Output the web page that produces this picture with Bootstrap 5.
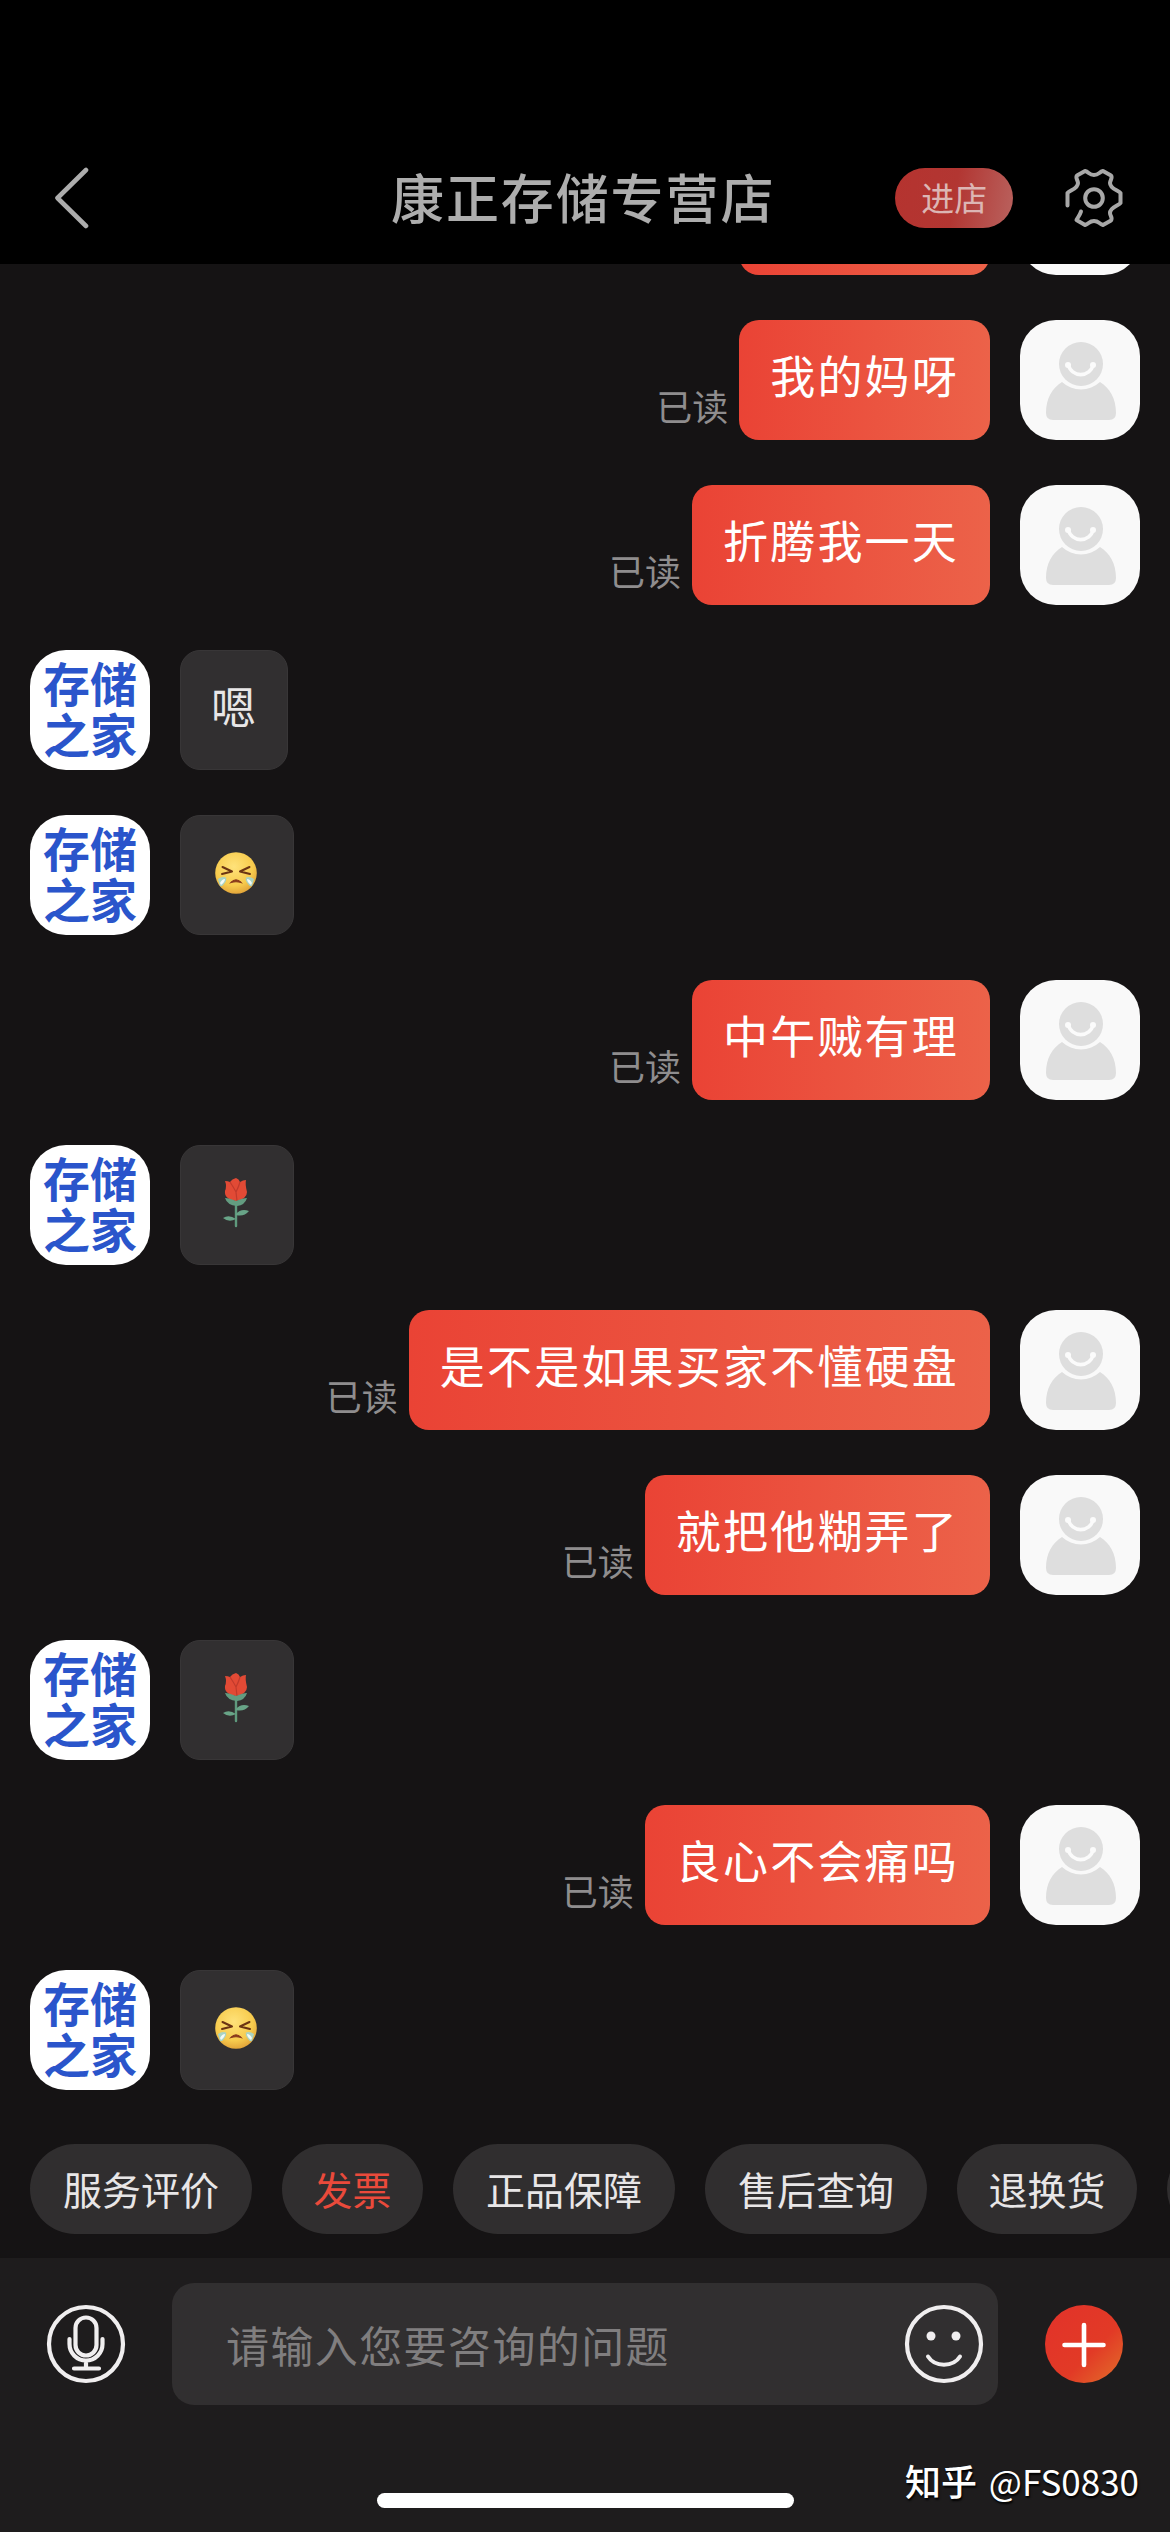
<!DOCTYPE html>
<html lang="zh-CN">
<head>
<meta charset="utf-8">
<title>康正存储专营店</title>
<link href="https://cdn.jsdelivr.net/npm/bootstrap@5.3.0/dist/css/bootstrap.min.css" rel="stylesheet">
<style>
html,body{background:#151314}
body{font-family:"Noto Sans CJK SC",sans-serif;color:#e8e6e7;width:1170px;height:2532px;overflow:hidden;line-height:1}
.topbar{height:264px;background:#000;padding:132px 45px 0 45px}
.topbar .inner{height:132px}
.title{font-size:53px;font-weight:500;letter-spacing:1.9px;color:#adadad;line-height:60px;margin-left:302px;padding-bottom:5px}
.enter{width:120px;height:60px;font-size:33px;color:#dcb6b4;background:linear-gradient(100deg,#b5332f 0%,#b23632 50%,#b9625e 100%);margin-left:120px;padding-bottom:2px}
.gear{margin-left:50px}
.feed{height:1880px;overflow:hidden}
.feed-list{gap:45px;margin-top:-109px;padding:0 30px}
.msg{height:120px}
.face{width:120px;height:120px;border-radius:36px;flex:none;overflow:hidden}
.me{background:#f9f9f9;margin-left:30px}
.shop{background:#fff;color:#2a55cb;font-weight:700;font-size:47px;line-height:51px;padding-top:6px;margin-right:30px;text-align:center}
.bub{height:120px;border-radius:20px;font-size:45px;letter-spacing:2.2px;line-height:60px;padding:25px 31px 0 31px;white-space:nowrap}
.out{background:linear-gradient(90deg,#ea4335,#ec6249);color:#fff}
.in{background:#312f30;width:108px;border:1px solid #383637;padding-left:30px}
.in.pic{width:114px;padding:0 2px 5px 0;display:flex;align-items:center;justify-content:center}
.read{font-size:36px;color:#8f8d8e;margin-right:11px;margin-bottom:17px;line-height:36px}
.chips{height:90px;padding-left:30px;gap:30px}
.chip{height:90px;font-size:39px;background:#302e2f;flex:none;white-space:nowrap;padding-bottom:1px}
.hotchip{color:#ea4a3b}
.w2{width:141px}.w3{width:180px}.w4{width:222px}
.dock{height:274px;background:#1e1c1d;margin-top:24px;padding:25px 46px 0}
.ask{width:826px;height:122px;border-radius:22px;background:#312f30;margin:0 46px;padding:0 14px 0 54px;font-size:43px;letter-spacing:1.4px;color:#807e7f}
.home{width:417px;height:15px;background:#fff;margin-top:88px}
.wm{right:31px;bottom:33px;font-size:35px;line-height:36px;color:#fff;text-shadow:1px 2px 2px #000}
.wm .brand{font-weight:500;font-size:36px;margin-right:4px}
svg{display:block;flex:none}
</style>
<script src="https://cdn.jsdelivr.net/npm/bootstrap@5.3.0/dist/js/bootstrap.bundle.min.js"></script>
</head>
<body class="position-relative m-0">
<svg width="0" height="0" class="position-absolute">
<defs>
<radialGradient id="skin" cx=".45" cy=".35" r=".65"><stop offset="0" stop-color="#ffe27a"/><stop offset=".7" stop-color="#f7cb4d"/><stop offset="1" stop-color="#e3a63a"/></radialGradient>
<linearGradient id="hot" x1="0" y1="0" x2="1" y2="1"><stop offset="0" stop-color="#e2322a"/><stop offset=".6" stop-color="#e23a26"/><stop offset="1" stop-color="#e2702a"/></linearGradient>
<symbol id="user" viewBox="0 0 120 120">
<path d="M26 93c0-14 6-25 16-31a28 28 0 0 0 38 0c10 6 16 17 16 31q0 7-7 7H33q-7 0-7-7z" fill="#dedede"/>
<circle cx="61" cy="44" r="22" fill="#dedede"/>
<path d="M48.500 45a12.500 12 0 0 0 24.500 0" fill="none" stroke="#fbfbfb" stroke-width="3.600"/>
<circle cx="48" cy="45" r="3" fill="#fbfbfb"/><circle cx="73" cy="45" r="3" fill="#fbfbfb"/>
</symbol>
<symbol id="cry" viewBox="0 0 42 42">
<circle cx="21" cy="21" r="20.800" fill="url(#skin)"/>
<path d="M7.500 15l9.500 4.500-10 2.500M34.500 15l-9.500 4.500 10 2.500" fill="none" stroke="#6b3413" stroke-width="2" stroke-linecap="round" stroke-linejoin="round"/>
<path d="M16 30.500q5-5.500 10 0-5-1.500-10 0z" fill="#8a3a1c" stroke="#8a3a1c" stroke-width="1.200"/>
<path d="M3 27q4-3 8-1.500 1 3-2 6.500-2 3-4 2zM39 27q-4-3-8-1.500-1 3 2 6.500 2 3 4 2z" fill="#a9d3c3"/>
<path d="M5 31q2-4 5-4 0 3-4 6zM37 31q-2-4-5-4 0 3 4 6z" fill="#f3faf6"/>
</symbol>
<symbol id="rose" viewBox="0 0 28 50">
<path d="M14 24v24" stroke="#5f9a7d" stroke-width="2.400" stroke-linecap="round"/>
<path d="M14 36q5-6 13-3-5 6-13 4zM14 41q-7-5-13-1 6 5 13 1z" fill="#68a487"/>
<path d="M3 3q3 0 5 1 2-3 6-4 3 1 4 4 3-2 6-2-1 4 1 12 0 7-11 9Q2 21 3 13 5 8 3 3z" fill="#e24a35"/>
<path d="M8 4q4 6 6 10 3-6 4-10M14 14l1 9" fill="none" stroke="#c03a2c" stroke-width="1.200"/>
<path d="M3 20q4 0 11 3 7-3 11-3-2 7-10 8Q5 27 3 20z" fill="#639c80"/>
</symbol>
</defs>
</svg>

<header class="topbar">
<div class="inner d-flex align-items-center">
<svg width="44" height="64" viewBox="0 0 44 64"><path d="M41 4L12.500 32 41 60" fill="none" stroke="#adadad" stroke-width="4.600" stroke-linecap="round" stroke-linejoin="round"/></svg>
<div class="title text-nowrap">康正存储专营店</div>
<div class="enter rounded-pill d-flex align-items-center justify-content-center">进店</div>
<svg class="gear" width="62" height="62" viewBox="-31 -31 62 62"><path d="M-26.500 7.500V-5C-24-8-16-9-16-15C-16-18-19-20-17-22.500L-9-27C-5-26-5-23 0-23S5-26 9-27L17-22.500C19-20 16-18 16-15C16-9 24-8 26.500-5V5C24 8 16 9 16 15C16 18 19 20 17 22.500L9 27C5 26 5 23 0 23S-5 26-9 27L-17.500 22C-16 19-14 17-13 13.500" fill="none" stroke="#a8a8a8" stroke-width="4" stroke-linecap="round" stroke-linejoin="round"/><circle r="8.800" fill="none" stroke="#a8a8a8" stroke-width="4"/></svg>
</div>
</header>

<main class="feed d-flex flex-column">
<div class="feed-list d-flex flex-column">
<div class="msg d-flex justify-content-end align-items-end"><div class="bub out">&emsp;&emsp;&emsp;&emsp;</div><div class="face me"></div></div>
<div class="msg d-flex justify-content-end align-items-end"><span class="read">已读</span><div class="bub out">我的妈呀</div><div class="face me"><svg width="120" height="120"><use href="#user"/></svg></div></div>
<div class="msg d-flex justify-content-end align-items-end"><span class="read">已读</span><div class="bub out">折腾我一天</div><div class="face me"><svg width="120" height="120"><use href="#user"/></svg></div></div>
<div class="msg d-flex"><div class="face shop">存储<br>之家</div><div class="bub in">嗯</div></div>
<div class="msg d-flex"><div class="face shop">存储<br>之家</div><div class="bub in pic"><svg width="42" height="42"><use href="#cry"/></svg></div></div>
<div class="msg d-flex justify-content-end align-items-end"><span class="read">已读</span><div class="bub out">中午贼有理</div><div class="face me"><svg width="120" height="120"><use href="#user"/></svg></div></div>
<div class="msg d-flex"><div class="face shop">存储<br>之家</div><div class="bub in pic"><svg width="28" height="50"><use href="#rose"/></svg></div></div>
<div class="msg d-flex justify-content-end align-items-end"><span class="read">已读</span><div class="bub out">是不是如果买家不懂硬盘</div><div class="face me"><svg width="120" height="120"><use href="#user"/></svg></div></div>
<div class="msg d-flex justify-content-end align-items-end"><span class="read">已读</span><div class="bub out">就把他糊弄了</div><div class="face me"><svg width="120" height="120"><use href="#user"/></svg></div></div>
<div class="msg d-flex"><div class="face shop">存储<br>之家</div><div class="bub in pic"><svg width="28" height="50"><use href="#rose"/></svg></div></div>
<div class="msg d-flex justify-content-end align-items-end"><span class="read">已读</span><div class="bub out">良心不会痛吗</div><div class="face me"><svg width="120" height="120"><use href="#user"/></svg></div></div>
<div class="msg d-flex"><div class="face shop">存储<br>之家</div><div class="bub in pic"><svg width="42" height="42"><use href="#cry"/></svg></div></div>
</div>
</main>

<nav class="chips d-flex overflow-hidden">
<div class="chip w4 rounded-pill d-flex align-items-center justify-content-center">服务评价</div>
<div class="chip hotchip w2 rounded-pill d-flex align-items-center justify-content-center">发票</div>
<div class="chip w4 rounded-pill d-flex align-items-center justify-content-center">正品保障</div>
<div class="chip w4 rounded-pill d-flex align-items-center justify-content-center">售后查询</div>
<div class="chip w3 rounded-pill d-flex align-items-center justify-content-center">退换货</div>
<div class="chip w4 rounded-pill"></div>
</nav>

<footer class="dock">
<div class="d-flex align-items-center">
<svg width="80" height="80" viewBox="0 0 80 80" fill="none" stroke="#f0eeef" stroke-width="4.200" stroke-linecap="round"><circle cx="40" cy="40" r="37"/><rect x="29.500" y="13.500" width="21" height="38" rx="10.500"/><path d="M23.500 35v5a16.500 16.500 0 0 0 33 0v-5M40 56.500V64M28 64.500h25"/></svg>
<div class="ask d-flex align-items-center"><span class="me-auto">请输入您要咨询的问题</span>
<svg width="80" height="80" viewBox="0 0 80 80"><circle cx="40" cy="40" r="37" fill="none" stroke="#f0eeef" stroke-width="4.200"/><circle cx="27" cy="32" r="4.500" fill="#f0eeef"/><circle cx="52" cy="32" r="4.500" fill="#f0eeef"/><path d="M24 52.500a18 15 0 0 0 32 0" fill="none" stroke="#f0eeef" stroke-width="4" stroke-linecap="round"/></svg></div>
<svg width="80" height="80" viewBox="0 0 80 80"><circle cx="40" cy="40" r="39" fill="url(#hot)"/><path d="M40 21v40M20.500 41h39" stroke="#fff" stroke-width="4.600" stroke-linecap="round"/></svg>
</div>
<div class="home rounded-pill mx-auto"></div>
<div class="wm position-absolute"><span class="brand">知乎</span> @FS0830</div>
</footer>
</body>
</html>
